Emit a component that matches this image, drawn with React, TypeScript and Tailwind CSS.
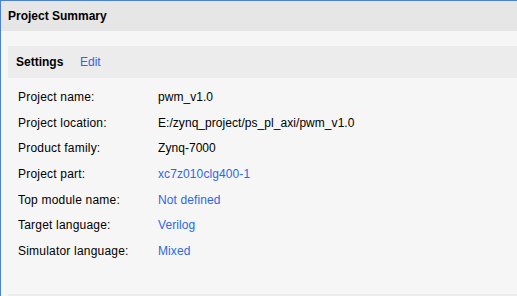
const rows: { label: string; value: string; link?: boolean }[] = [
  { label: "Project name:", value: "pwm_v1.0" },
  { label: "Project location:", value: "E:/zynq_project/ps_pl_axi/pwm_v1.0" },
  { label: "Product family:", value: "Zynq-7000" },
  { label: "Project part:", value: "xc7z010clg400-1", link: true },
  { label: "Top module name:", value: "Not defined", link: true },
  { label: "Target language:", value: "Verilog", link: true },
  { label: "Simulator language:", value: "Mixed", link: true },
];

export default function App() {
  return (
    <div
      className="w-[517px] h-[296px] overflow-hidden border-t border-l border-[#4a80d6] bg-[#f6f6f6] text-[12px] text-black flex flex-col"
      style={{ fontFamily: "Tahoma, 'Liberation Sans', Arial, sans-serif" }}
    >
      <div className="h-[30px] shrink-0 bg-[#e6e6e6] pl-[7px] flex items-center font-bold">
        Project Summary
      </div>
      <div className="flex-1 flex flex-col pl-[7px] pt-[15px]">
        <div className="h-[32px] bg-[#ececec] flex items-center pl-[8px]">
          <span className="font-bold w-[64px]">Settings</span>
          <span className="text-[#2f66e6]">Edit</span>
        </div>
        <div className="flex-1 flex flex-col pl-[10px] pt-[6px]">
          {rows.map((r) => (
            <div key={r.label} className="h-[25.7px] flex items-center">
              <span className="w-[140px] shrink-0 tracking-[0.2px]">{r.label}</span>
              <span className={r.link ? "text-[#2f66e6] tracking-[0.1px]" : "tracking-[0.05px]"}>
                {r.value}
              </span>
            </div>
          ))}
        </div>
        <div className="h-[2px] bg-[#ececec] shrink-0" />
      </div>
    </div>
  );
}
